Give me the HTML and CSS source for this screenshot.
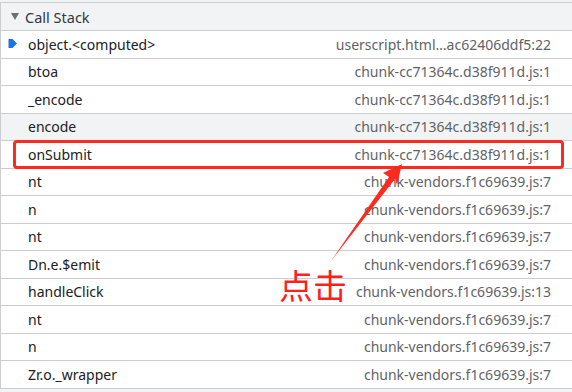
FILE: index.html
```html
<!DOCTYPE html>
<html lang="en">
<head>
    <meta charset="UTF-8">
    <meta name="viewport" content="width=device-width, initial-scale=1.0">
    <link rel="stylesheet" href="styles.css">
</head>
<body>
    <div class="pane">
        <div class="pane-header">
            <span class="caret"></span>
            <span class="title">Call Stack</span>
        </div>
        <div class="frames">
            <div class="frame current">
                <svg class="pointer" viewBox="0 0 9 11" width="9" height="11">
                    <path d="M0.5 1 L4.5 1 L9 5.5 L4.5 10 L0.5 10 Z" fill="#1a73e8"/>
                </svg>
                <span class="fn">object.&lt;computed&gt;</span>
                <span class="loc">userscript.html…ac62406ddf5:22</span>
            </div>
            <div class="frame"><span class="fn">btoa</span><span class="loc">chunk-cc71364c.d38f911d.js:1</span></div>
            <div class="frame"><span class="fn">_encode</span><span class="loc">chunk-cc71364c.d38f911d.js:1</span></div>
            <div class="frame hover"><span class="fn">encode</span><span class="loc">chunk-cc71364c.d38f911d.js:1</span></div>
            <div class="frame"><span class="fn">onSubmit</span><span class="loc">chunk-cc71364c.d38f911d.js:1</span></div>
            <div class="frame"><span class="fn">nt</span><span class="loc">chunk-vendors.f1c69639.js:7</span></div>
            <div class="frame"><span class="fn">n</span><span class="loc">chunk-vendors.f1c69639.js:7</span></div>
            <div class="frame"><span class="fn">nt</span><span class="loc">chunk-vendors.f1c69639.js:7</span></div>
            <div class="frame"><span class="fn">Dn.e.$emit</span><span class="loc">chunk-vendors.f1c69639.js:7</span></div>
            <div class="frame"><span class="fn">handleClick</span><span class="loc">chunk-vendors.f1c69639.js:13</span></div>
            <div class="frame"><span class="fn">nt</span><span class="loc">chunk-vendors.f1c69639.js:7</span></div>
            <div class="frame"><span class="fn">n</span><span class="loc">chunk-vendors.f1c69639.js:7</span></div>
            <div class="frame"><span class="fn">Zr.o._wrapper</span><span class="loc">chunk-vendors.f1c69639.js:7</span></div>
        </div>
    </div>

    <!-- annotation drawn over the screenshot -->
    <div class="mark-box"></div>
    <svg class="mark-arrow" viewBox="0 0 572 392" width="572" height="392">
        <polygon points="402,164 383,173 389,177 331,261 395,179 397,185" fill="#ff2a1f"/>
    </svg>
    <div class="mark-label">点击</div>
</body>
</html>
```

FILE: styles.css
```css
body {
    margin: 0;
    padding: 0;
    width: 572px;
    height: 392px;
    overflow: hidden;
    position: relative;
    background-color: #f1f3f4;
    font-family: 'Noto Sans', 'Open Sans', sans-serif;
    font-size: 14px;
}

.pane {
    margin-top: 2px;
    border-top: 1px solid #cbcdd1;
    border-left: 1px solid #cbcdd1;
}

.pane-header {
    display: flex;
    align-items: center;
    height: 27px;
    background-color: #f1f3f4;
    border-bottom: 1px solid #cbcdd1;
    color: #303942;
    font-size: 14.5px;
}

.caret {
    width: 0;
    height: 0;
    margin-left: 10px;
    margin-right: 6px;
    border-left: 4px solid transparent;
    border-right: 4px solid transparent;
    border-top: 7px solid #6e6e6e;
}

.frame {
    display: flex;
    align-items: center;
    height: 26.5px;
    padding-left: 27px;
    padding-right: 21px;
    background-color: #fff;
    border-bottom: 1px solid #cbcdd1;
    position: relative;
    color: #202124;
}

.frame.hover {
    background-color: #f1f3f4;
}

.pointer {
    position: absolute;
    left: 7px;
    top: 7px;
}

.fn {
    flex: 1;
    white-space: nowrap;
}

.loc {
    color: #5f6368;
    white-space: nowrap;
}

.mark-box {
    position: absolute;
    left: 13px;
    top: 140px;
    width: 545px;
    height: 23px;
    border: 3px solid #ff2a1f;
    border-radius: 4px;
}

.mark-arrow {
    position: absolute;
    left: 0;
    top: 0;
    pointer-events: none;
}

.mark-label {
    position: absolute;
    left: 279px;
    top: 263px;
    font-family: 'Noto Sans CJK SC', sans-serif;
    font-size: 34px;
    line-height: 44px;
    color: #ff1f1f;
    text-shadow: 0 0 1px #fff;
}
```
